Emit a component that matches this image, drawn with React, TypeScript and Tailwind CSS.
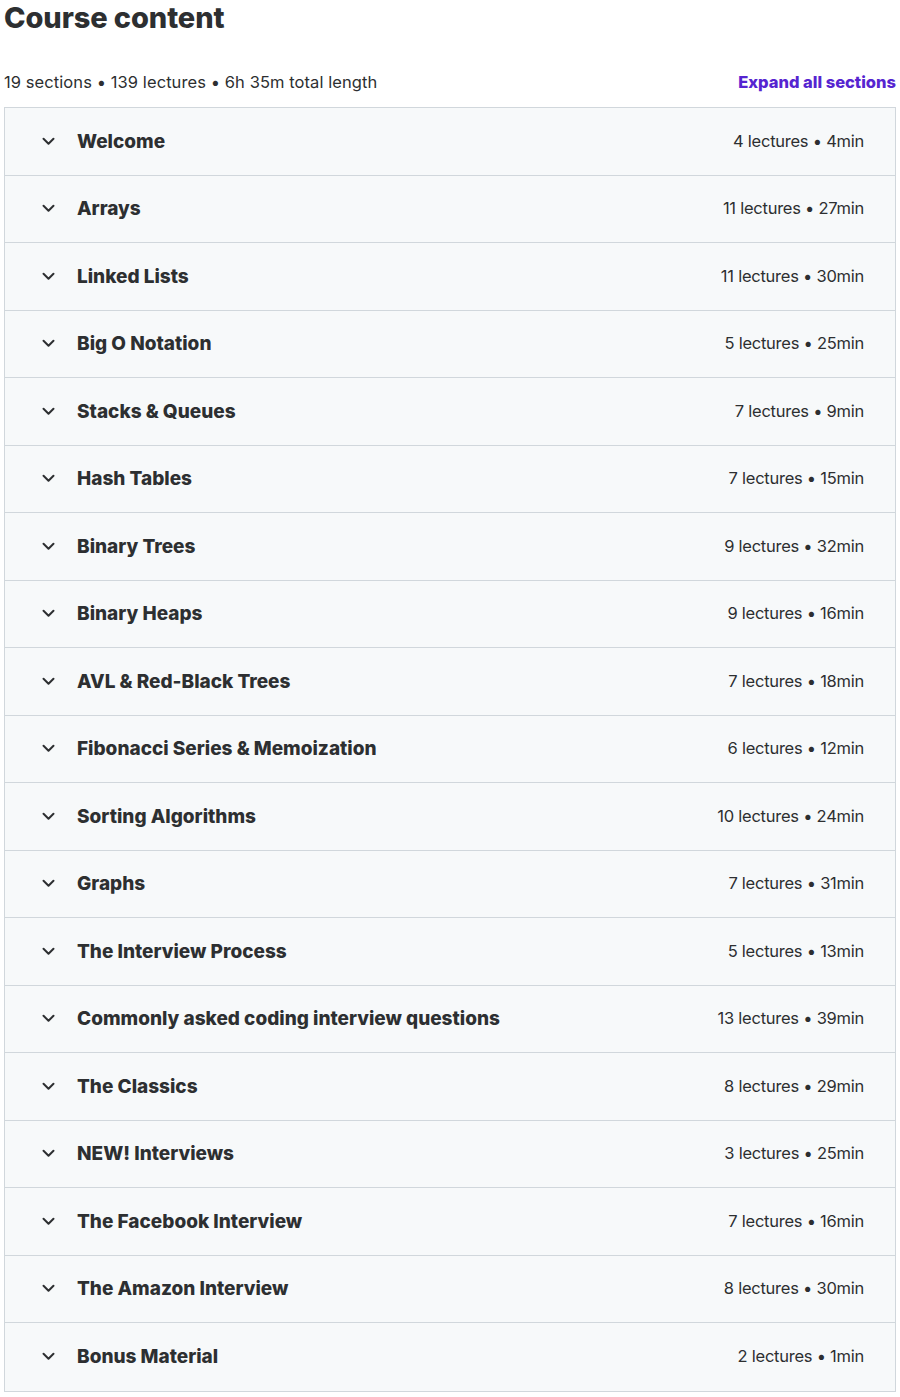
import { type FC } from 'react';

type Section = {
	title: string;
	lectures: number;
	length: string;
};

const sections: Section[] = [
	{ title: 'Welcome', lectures: 4, length: '4min' },
	{ title: 'Arrays', lectures: 11, length: '27min' },
	{ title: 'Linked Lists', lectures: 11, length: '30min' },
	{ title: 'Big O Notation', lectures: 5, length: '25min' },
	{ title: 'Stacks & Queues', lectures: 7, length: '9min' },
	{ title: 'Hash Tables', lectures: 7, length: '15min' },
	{ title: 'Binary Trees', lectures: 9, length: '32min' },
	{ title: 'Binary Heaps', lectures: 9, length: '16min' },
	{ title: 'AVL & Red-Black Trees', lectures: 7, length: '18min' },
	{ title: 'Fibonacci Series & Memoization', lectures: 6, length: '12min' },
	{ title: 'Sorting Algorithms', lectures: 10, length: '24min' },
	{ title: 'Graphs', lectures: 7, length: '31min' },
	{ title: 'The Interview Process', lectures: 5, length: '13min' },
	{ title: 'Commonly asked coding interview questions', lectures: 13, length: '39min' },
	{ title: 'The Classics', lectures: 8, length: '29min' },
	{ title: 'NEW! Interviews', lectures: 3, length: '25min' },
	{ title: 'The Facebook Interview', lectures: 7, length: '16min' },
	{ title: 'The Amazon Interview', lectures: 8, length: '30min' },
	{ title: 'Bonus Material', lectures: 2, length: '1min' }
];

const Chevron: FC = () => (
	<svg width="13" height="9" viewBox="0 0 13 9" fill="none" className="shrink-0">
		<polyline
			points="1.5,1.8 6.5,6.8 11.5,1.8"
			stroke="#2d2f31"
			strokeWidth="2"
			strokeLinecap="round"
			strokeLinejoin="round"
		/>
	</svg>
);

const SectionRow: FC<{ section: Section; last: boolean }> = ({ section, last }) => (
	<div
		className={`flex h-[67.5px] items-center bg-[#f7f9fa] pl-[37px] pr-[31px] ${
			last ? '' : 'border-b border-[#d1d7dc]'
		}`}
	>
		<Chevron />
		<div className="ml-[22px] flex-1 pt-[1px] text-[19px] font-extrabold tracking-[0px] text-[#2d2f31]">
			{section.title}
		</div>
		<div className="text-[16.5px] tracking-[-0.25px] text-[#2d2f31]">
			{section.lectures} lectures • {section.length}
		</div>
	</div>
);

export default function App() {
	return (
		<div className="w-[900px] bg-white font-['Inter',sans-serif] text-[#2d2f31]">
			<h2 className="pl-[4px] text-[29px] leading-[35px] font-extrabold tracking-[-0.1px]">
				Course content
			</h2>
			<div className="flex items-end justify-between pl-[4px] pr-[4px] pt-[37px] pb-[15px]">
				<div className="text-[16.5px] leading-[20px] tracking-[0.08px]">
					19 sections • 139 lectures • 6h 35m total length
				</div>
				<button className="text-[16.5px] leading-[20px] font-extrabold tracking-[0px] text-[#5624d0]">
					Expand all sections
				</button>
			</div>
			<div className="mx-[4px] border border-[#d1d7dc]">
				{sections.map((section, i) => (
					<SectionRow key={section.title} section={section} last={i === sections.length - 1} />
				))}
			</div>
		</div>
	);
}
